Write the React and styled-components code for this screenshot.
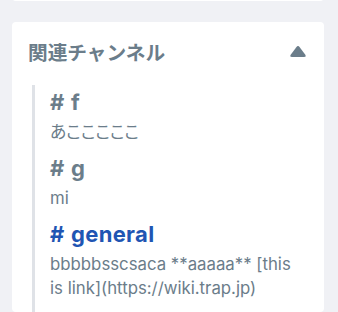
import styled, { createGlobalStyle } from "styled-components";

const GlobalStyle = createGlobalStyle`
  html, body {
    margin: 0;
    padding: 0;
    background: #f0f1f5;
    font-family: Inter, "Noto Sans CJK JP", sans-serif;
    overflow: hidden;
  }
`;

const Page = styled.div`
  display: flex;
  flex-direction: column;
  gap: 21px;
  padding: 0 14px 0 12px;
  margin-top: -20px;
`;

const Card = styled.section`
  background: #ffffff;
  border-radius: 4px;
  padding: ${({ $empty }) => ($empty ? "0" : "16px 16px 0 16px")};
  height: ${({ $empty }) => ($empty ? "21px" : "auto")};
`;

const Header = styled.div`
  display: flex;
  align-items: center;
  justify-content: space-between;
  margin-bottom: 19px;
`;

const Title = styled.h2`
  margin: 0;
  font-size: 19.7px;
  line-height: 28px;
  font-weight: 700;
  color: #6b7d8a;
  font-family: "Noto Sans CJK JP", Inter, sans-serif;
`;

const Toggle = styled.button`
  border: none;
  background: none;
  padding: 0;
  margin-right: 1px;
  display: flex;
  color: #6b7d8a;
  cursor: pointer;
`;

const List = styled.ul`
  list-style: none;
  margin: 0 0 0 4px;
  padding: 3px 0 12px 15px;
  border-left: 3px solid #dfe2e7;
  display: flex;
  flex-direction: column;
  gap: 10px;
`;

const Item = styled.li`
  display: flex;
  flex-direction: column;
  gap: 4px;
`;

const ChannelName = styled.div`
  font-size: 22px;
  line-height: 28px;
  font-weight: 700;
  font-family: Inter, sans-serif;
  letter-spacing: 0.3px;
  word-spacing: 1px;
  color: ${({ $current }) => ($current ? "#1f55b3" : "#6b7d8a")};
`;

const Topic = styled.div`
  font-size: 16.8px;
  line-height: 24px;
  color: #6b7d8a;
  font-family: Inter, "Noto Sans CJK JP", sans-serif;
  font-feature-settings: "palt";
`;

const channels = [
  { name: "f", topic: "あこここここ" },
  { name: "g", topic: "mi" },
  {
    name: "general",
    topic: "bbbbbsscsaca **aaaaa** [this is link](https://wiki.trap.jp)",
    current: true,
  },
];

const App = () => {
  return (
    <>
      <GlobalStyle />
      <Page>
        <Card $empty />
        <Card>
          <Header>
            <Title>関連チャンネル</Title>
            <Toggle aria-label="collapse">
              <svg width="18" height="14" viewBox="0 0 18 14">
                <path
                  d="M7.3 2.2 Q9 0 10.7 2.2 L16.3 9.8 Q17.6 12 15 12 L3 12 Q0.4 12 1.7 9.8 Z"
                  fill="currentColor"
                />
              </svg>
            </Toggle>
          </Header>
          <List>
            {channels.map((c) => (
              <Item key={c.name}>
                <ChannelName $current={c.current}># {c.name}</ChannelName>
                <Topic>{c.topic}</Topic>
              </Item>
            ))}
          </List>
        </Card>
      </Page>
    </>
  );
};

export default App;
